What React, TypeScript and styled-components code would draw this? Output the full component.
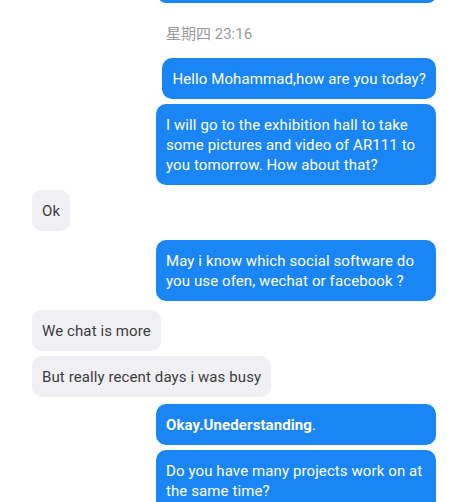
import React from "react";
import styled, { createGlobalStyle } from "styled-components";

const Global = createGlobalStyle`
  html, body {
    margin: 0;
    padding: 0;
    background: #ffffff;
  }
  body {
    font-family: Roboto, "Noto Sans CJK SC", "Liberation Sans", sans-serif;
    -webkit-font-smoothing: antialiased;
  }
`;

const Screen = styled.div`
  width: 452px;
  height: 502px;
  overflow: hidden;
  background: #ffffff;
`;

const Thread = styled.div`
  display: flex;
  flex-direction: column;
  padding: 0 16px 0 32px;
`;

const Row = styled.div<{ $mine?: boolean; $gap?: number }>`
  display: flex;
  justify-content: ${(p) => (p.$mine ? "flex-end" : "flex-start")};
  margin-top: ${(p) => p.$gap ?? 5}px;
`;

const Bubble = styled.div<{ $mine?: boolean; $full?: boolean }>`
  box-sizing: border-box;
  max-width: 280px;
  ${(p) => (p.$full ? "width: 280px;" : "")}
  padding: 10.5px 10px;
  border-radius: 10px;
  font-size: 15px;
  line-height: 20px;
  letter-spacing: 0.1px;
  background: ${(p) => (p.$mine ? "#1a86f5" : "#efeff4")};
  color: ${(p) => (p.$mine ? "#ffffff" : "#3d3d3d")};
`;

const CutBubble = styled(Bubble)`
  width: 278px;
  height: 16px;
  padding: 0;
  margin-top: -13px;
`;

const Stamp = styled.div`
  box-sizing: border-box;
  width: 280px;
  padding-left: 10px;
  margin-top: 22px;
  font-size: 15px;
  line-height: 18px;
  color: #9a9a9a;
`;

const Strong = styled.b`
  font-weight: 700;
`;

export default function App() {
  return (
    <Screen>
      <Global />
      <Thread>
        <Row $mine $gap={0}>
          <CutBubble $mine />
        </Row>
        <Row $mine $gap={0}>
          <Stamp>星期四 23:16</Stamp>
        </Row>
        <Row $mine $gap={15}>
          <Bubble $mine>Hello Mohammad,how are you today?</Bubble>
        </Row>
        <Row $mine>
          <Bubble $mine $full>
            I will go to the exhibition hall to take some pictures and video of AR111 to you tomorrow. How about that?
          </Bubble>
        </Row>
        <Row $gap={5}>
          <Bubble>Ok</Bubble>
        </Row>
        <Row $mine $gap={9}>
          <Bubble $mine $full>
            May i know which social software do you use ofen, wechat or facebook ?
          </Bubble>
        </Row>
        <Row $gap={9}>
          <Bubble>We chat is more</Bubble>
        </Row>
        <Row>
          <Bubble>But really recent days i was busy</Bubble>
        </Row>
        <Row $mine $gap={7}>
          <Bubble $mine $full>
            <Strong>Okay.Unederstanding</Strong>.
          </Bubble>
        </Row>
        <Row $mine>
          <Bubble $mine $full>
            Do you have many projects work on at the same time?
          </Bubble>
        </Row>
      </Thread>
    </Screen>
  );
}
